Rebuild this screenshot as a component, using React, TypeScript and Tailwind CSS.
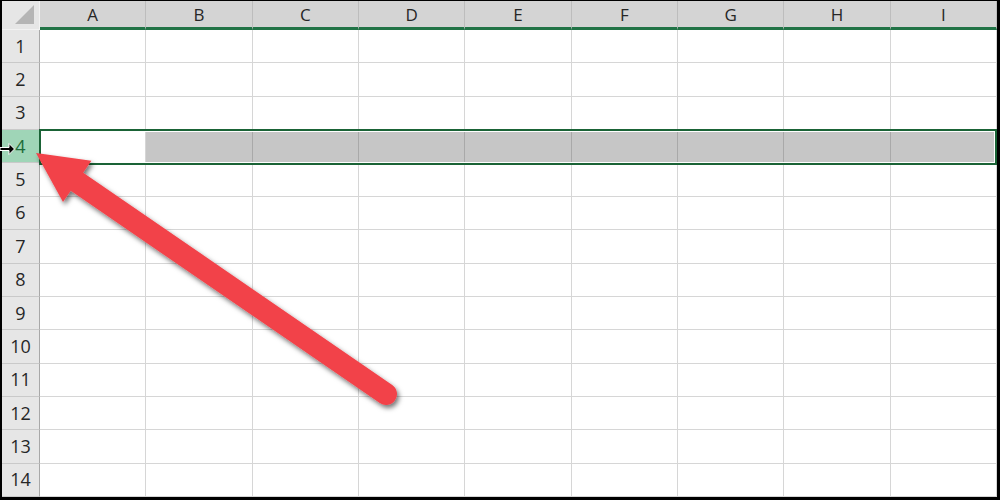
import React from "react";

const COLS = ["A", "B", "C", "D", "E", "F", "G", "H", "I"];
const ROWS = Array.from({ length: 14 }, (_, i) => i + 1);

export default function App() {
  return (
    <div className="relative w-[1000px] h-[500px] bg-black pt-px pl-[2px] pr-[3px] pb-[3px] font-['Open_Sans','Noto_Sans',sans-serif]">
      <div className="relative grid h-full w-full grid-cols-[38px_repeat(9,1fr)] grid-rows-[29px_repeat(14,1fr)] bg-white">
        {/* corner */}
        <div className="flex items-end justify-end bg-[#e6e6e6] border-r border-b border-[#f2f2f2] pr-[4px] pb-[4px]">
          <svg width="20" height="20" viewBox="0 0 20 20">
            <polygon points="19,0 19,19 0,19" fill="#b5b5b5" />
          </svg>
        </div>
        {COLS.map((c) => (
          <div
            key={c}
            className="flex items-center justify-center bg-[#d4d4d4] border-r border-r-[#bdbdbd] border-b-[3px] border-b-[#217346] pt-[1px] text-[17px] text-[#262626]"
          >
            {c}
          </div>
        ))}
        {ROWS.map((r) => (
          <React.Fragment key={r}>
            <div
              className={
                r === 4
                  ? "flex items-center justify-center bg-[#9fd5b7] border-b border-b-[#c9c9c9] border-r border-r-[#a8a8a8] text-[18px] text-[#1d6b3a]"
                  : "flex items-center justify-center bg-[#e6e6e6] border-b border-b-[#c9c9c9] border-r border-r-[#a8a8a8] text-[18px] text-[#262626]"
              }
            >
              {r}
            </div>
            {COLS.map((c, ci) => (
              <div
                key={c}
                className={
                  r === 4 && ci > 0
                    ? "bg-[#c6c6c6] border-r border-r-[#a9a9a9] border-b border-b-[#d6d6d6]"
                    : "bg-white border-r border-b border-[#d6d6d6]"
                }
              />
            ))}
          </React.Fragment>
        ))}
        {/* selection box */}
        <div className="absolute left-[37px] top-[128px] w-[958px] h-[36px] border-[2px] border-[#1a6336] shadow-[inset_0_0_0_1px_#ffffff]" />
      </div>

      <svg
        className="pointer-events-none absolute left-0 top-0"
        width="1000"
        height="500"
        viewBox="0 0 1000 500"
      >
        <defs>
          <filter id="sh" x="-20%" y="-20%" width="140%" height="140%">
            <feDropShadow dx="2" dy="3" stdDeviation="2.5" floodColor="#000" floodOpacity="0.55" />
          </filter>
        </defs>
        <g filter="url(#sh)">
          <line x1="386" y1="394" x2="73" y2="179" stroke="#f2434a" strokeWidth="22" strokeLinecap="round" />
          <polygon points="36,153 91.4,160.8 63,202" fill="#f2434a" />
        </g>
        {/* row-select cursor */}
        <path
          d="M0 147.5 H9 V143.5 L14.5 149 L9 154.5 V150.5 H0 Z"
          fill="#000"
          stroke="#fff"
          strokeWidth="1"
        />
      </svg>
    </div>
  );
}
